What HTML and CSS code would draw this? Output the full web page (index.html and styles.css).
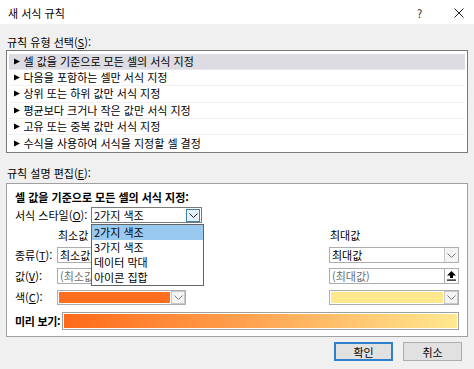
FILE: index.html
```html
<!DOCTYPE html>
<html lang="ko">
<head>
<meta charset="utf-8">
<title>새 서식 규칙</title>
<link rel="stylesheet" href="styles.css">
</head>
<body>
<div class="dialog">
  <div class="titlebar">
    <span class="title">새 서식 규칙</span>
    <span class="help">?</span>
    <span class="close"><svg width="10" height="10" viewBox="0 0 10 10"><path d="M0.5 0.5 L9.5 9.5 M9.5 0.5 L0.5 9.5" stroke="#222" stroke-width="1" fill="none"/></svg></span>
  </div>
  <div class="content">
    <div class="label l1">규칙 유형 선택(<u>S</u>):</div>
    <div class="listbox">
      <div class="item sel"><svg class="tri" width="6" height="7" viewBox="0 0 6 7"><polygon points="0,0.5 6,3.5 0,6.5" fill="#000"/></svg>셀 값을 기준으로 모든 셀의 서식 지정</div>
      <div class="item"><svg class="tri" width="6" height="7" viewBox="0 0 6 7"><polygon points="0,0.5 6,3.5 0,6.5" fill="#000"/></svg>다음을 포함하는 셀만 서식 지정</div>
      <div class="item"><svg class="tri" width="6" height="7" viewBox="0 0 6 7"><polygon points="0,0.5 6,3.5 0,6.5" fill="#000"/></svg>상위 또는 하위 값만 서식 지정</div>
      <div class="item"><svg class="tri" width="6" height="7" viewBox="0 0 6 7"><polygon points="0,0.5 6,3.5 0,6.5" fill="#000"/></svg>평균보다 크거나 작은 값만 서식 지정</div>
      <div class="item"><svg class="tri" width="6" height="7" viewBox="0 0 6 7"><polygon points="0,0.5 6,3.5 0,6.5" fill="#000"/></svg>고유 또는 중복 값만 서식 지정</div>
      <div class="item last"><svg class="tri" width="6" height="7" viewBox="0 0 6 7"><polygon points="0,0.5 6,3.5 0,6.5" fill="#000"/></svg>수식을 사용하여 서식을 지정할 셀 결정</div>
    </div>
    <div class="label l2">규칙 설명 편집(<u>E</u>):</div>
    <div class="editbox">
      <div class="heading">셀 값을 기준으로 모든 셀의 서식 지정:</div>
      <div class="style-row">
        <span class="style-label">서식 스타일(<u>O</u>):</span>
        <div class="combo focus">
          <span class="combo-text">2가지 색조</span>
          <span class="arrow focus-arrow"><svg width="9" height="5" viewBox="0 0 9 5"><path d="M0.5 0.5 L4.5 4.5 L8.5 0.5" stroke="#222" fill="none"/></svg></span>
          <div class="dropdown">
            <div class="opt hl">2가지 색조</div>
            <div class="opt">3가지 색조</div>
            <div class="opt">데이터 막대</div>
            <div class="opt">아이콘 집합</div>
          </div>
        </div>
      </div>
      <div class="grid">
        <span class="cell"></span>
        <span class="cell colhead">최소값</span>
        <span class="cell"></span>
        <span class="cell colhead">최대값</span>

        <span class="cell rowlabel">종류(<u>T</u>):</span>
        <div class="box"><span class="box-text">최소값</span><span class="arrow"><svg width="9" height="5" viewBox="0 0 9 5"><path d="M0.5 0.5 L4.5 4.5 L8.5 0.5" stroke="#777" fill="none"/></svg></span></div>
        <span class="cell"></span>
        <div class="box"><span class="box-text">최대값</span><span class="arrow"><svg width="9" height="5" viewBox="0 0 9 5"><path d="M0.5 0.5 L4.5 4.5 L8.5 0.5" stroke="#777" fill="none"/></svg></span></div>

        <span class="cell rowlabel">값(<u>V</u>):</span>
        <div class="box input"><span class="box-text ph">(최소값)</span><span class="arrow up"><svg width="9" height="10" viewBox="0 0 9 10"><polygon points="4.5,0 9,4.5 6,4.5 6,7 3,7 3,4.5 0,4.5" fill="#000"/><rect x="0" y="8.5" width="9" height="1.2" fill="#000"/></svg></span></div>
        <span class="cell"></span>
        <div class="box input"><span class="box-text ph">(최대값)</span><span class="arrow up"><svg width="9" height="10" viewBox="0 0 9 10"><polygon points="4.5,0 9,4.5 6,4.5 6,7 3,7 3,4.5 0,4.5" fill="#000"/><rect x="0" y="8.5" width="9" height="1.2" fill="#000"/></svg></span></div>

        <span class="cell rowlabel">색(<u>C</u>):</span>
        <div class="box color"><span class="swatch min"></span><span class="arrow"><svg width="9" height="5" viewBox="0 0 9 5"><path d="M0.5 0.5 L4.5 4.5 L8.5 0.5" stroke="#777" fill="none"/></svg></span></div>
        <span class="cell"></span>
        <div class="box color"><span class="swatch max"></span><span class="arrow"><svg width="9" height="5" viewBox="0 0 9 5"><path d="M0.5 0.5 L4.5 4.5 L8.5 0.5" stroke="#777" fill="none"/></svg></span></div>
      </div>
      <div class="preview-row">
        <span class="preview-label">미리 보기:</span>
        <div class="preview"><span class="gradient"></span></div>
      </div>
    </div>
    <div class="buttons">
      <button class="btn default">확인</button>
      <button class="btn">취소</button>
    </div>
  </div>
</div>
</body>
</html>
```

FILE: styles.css
```css
* { box-sizing: border-box; }
html, body {
  margin: 0;
  padding: 0;
  background: #f0f0f0;
}
body {
  font-family: "Noto Sans CJK KR", "Noto Sans", sans-serif;
  font-size: 11px;
  color: #000;
  width: 474px;
  height: 369px;
  overflow: hidden;
}
u { text-decoration: underline; text-underline-offset: 1px; }

.dialog { width: 474px; height: 369px; }

.titlebar {
  height: 24px;
  background: #fff;
  display: flex;
  align-items: center;
  padding-left: 8px;
  padding-top: 2px;
}
.title { flex: 1; font-size: 11px; line-height: 14px; }
.help { width: 37px; font-size: 11px; line-height: 14px; color: #222; }
.close { width: 20px; display: flex; align-items: center; }

.content { padding: 0 6px 0 6px; }

.label { height: 14px; line-height: 14px; padding-left: 1px; }
.l1 { margin-top: 11px; }
.l2 { margin-top: 13px; }

.listbox {
  margin-top: 1px;
  width: 462px;
  border: 1px solid #7a7a7a;
  box-shadow: inset 0 0 0 1px #fff;
  background: #fff;
  padding: 2.5px 2px 0.6px 2px;
}
.item {
  height: 16.4px;
  line-height: 15.4px;
  display: flex;
  align-items: center;
  padding-left: 4.5px;
  border-bottom: 1px solid #f0f0f0;
  white-space: nowrap;
}
.item.last { border-bottom: none; }
.item.sel { background: #dcdce2; border-bottom-color: #e8e8ec; }
.tri { margin-right: 4px; flex: none; }

.editbox {
  margin-top: 3px;
  width: 462px;
  border: 1px solid #a0a0a0;
  background: #fff;
  padding: 6px 8px 6px 8px;
}
.heading { font-weight: bold; height: 14px; line-height: 14px; white-space: nowrap; }

.style-row {
  margin-top: 3px;
  height: 16px;
  display: flex;
  align-items: center;
}
.style-label { width: 76px; flex: none; line-height: 14px; white-space: nowrap; }

.combo {
  position: relative;
  width: 111px;
  height: 16px;
  border: 1px solid #7a7a7a;
  background: #fff;
  display: flex;
  align-items: center;
}
.combo-text { flex: 1; padding-left: 2px; line-height: 14px; white-space: nowrap; }
.arrow {
  width: 14px;
  height: 14px;
  border: 1px solid #c8c8c8;
  background: #f4f4f4;
  display: flex;
  align-items: center;
  justify-content: center;
  flex: none;
}
.focus-arrow {
  border-color: #3c7fb1;
  background: #e5f1fb;
  height: 13px;
  margin-right: 1px;
}

.dropdown {
  position: absolute;
  top: 16px;
  left: -1px;
  width: 113px;
  border: 1px solid #646464;
  background: #fff;
  z-index: 5;
}
.opt {
  height: 15px;
  line-height: 15px;
  padding-left: 2px;
  white-space: nowrap;
}
.opt.hl { background: #99c9ef; }

.grid {
  margin-top: 5px;
  display: grid;
  grid-template-columns: 42px 129px 143px 130px;
  grid-template-rows: 14px 16px 16px 16px;
  row-gap: 5px;
}
.cell { line-height: 14px; display: flex; align-items: center; white-space: nowrap; }
.colhead { padding-left: 1px; }

.box {
  border: 1px solid #adadad;
  background: #fff;
  display: flex;
  align-items: center;
  height: 16px;
}
.box-text { flex: 1; padding-left: 2px; line-height: 14px; white-space: nowrap; }
.box-text.ph { color: #6d6d6d; }
.box .arrow { height: 14px; border-width: 0 0 0 1px; }
.box .arrow.up { background: #fff; border-color: #adadad; }

.box.color { padding: 1px 0 1px 1px; height: 15px; margin-top: 1px; }
.swatch { flex: 1; height: 100%; margin-right: 1px; }
.swatch.min { background: #ff6e1f; }
.swatch.max { background: #ffe88c; }
.box.color .arrow { height: 13px; border: 1px solid #c8c8c8; }

.preview-row {
  margin-top: 7px;
  height: 18px;
  display: flex;
  align-items: center;
}
.preview-label {
  width: 47px;
  flex: none;
  font-weight: bold;
  line-height: 14px;
  white-space: nowrap;
  letter-spacing: -0.3px;
}
.preview {
  width: 397px;
  height: 18px;
  border: 1px solid #a0a0a0;
  padding: 1px;
  display: flex;
}
.gradient {
  flex: 1;
  background: linear-gradient(to right, #ff6a1a, #ffa04e 45%, #ffe890);
}

.buttons {
  margin-top: 5px;
  display: flex;
  justify-content: flex-end;
  gap: 10px;
  padding-right: 6px;
}
.btn {
  width: 59px;
  height: 19px;
  font-family: inherit;
  font-size: 11px;
  line-height: 14px;
  padding: 0;
  background: #e1e1e1;
  border: 1px solid #adadad;
  color: #000;
}
.btn.default {
  border: 2px solid #2f7fcf;
}
```
